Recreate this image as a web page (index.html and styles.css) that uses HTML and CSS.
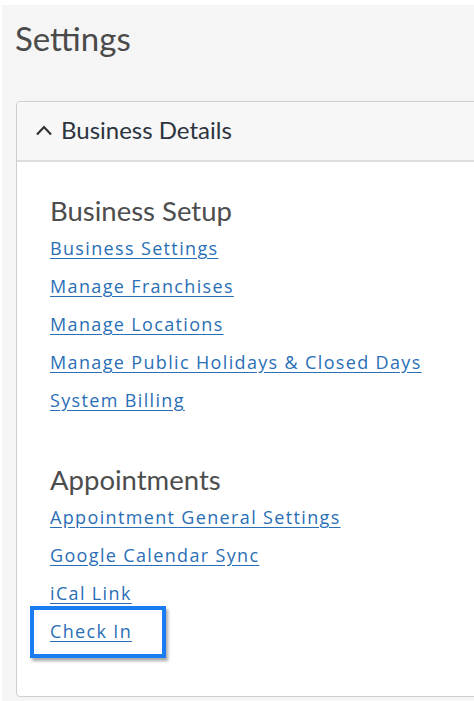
FILE: index.html
```html
<!DOCTYPE html>
<html>
<head>
<meta charset="utf-8">
<link rel="stylesheet" href="styles.css">
</head>
<body>
<div class="page">
  <h1 class="title">Settings</h1>
  <div class="card">
    <div class="card-header">
      <svg class="chevron" width="18" height="12" viewBox="0 0 18 12"><path d="M2 10.5 L9 3 L16 10.5" fill="none" stroke="#333" stroke-width="2.2"/></svg>
      <span>Business Details</span>
    </div>
    <div class="card-body">
      <section class="group">
        <h2>Business Setup</h2>
        <a href="#">Business Settings</a>
        <a href="#">Manage Franchises</a>
        <a href="#">Manage Locations</a>
        <a href="#">Manage Public Holidays &amp; Closed Days</a>
        <a href="#">System Billing</a>
      </section>
      <section class="group">
        <h2>Appointments</h2>
        <a href="#">Appointment General Settings</a>
        <a href="#">Google Calendar Sync</a>
        <a href="#">iCal Link</a>
        <a href="#" class="highlight">Check In</a>
      </section>
    </div>
  </div>
</div>
</body>
</html>
```

FILE: styles.css
```css
html, body {
  margin: 0;
  padding: 0;
  background: #ffffff;
}
body {
  width: 474px;
  height: 701px;
  overflow: hidden;
}
.page {
  margin: 5px 0 0 2px;
  background: #f5f5f5;
  height: 696px;
  padding: 13px 0 0 13px;
  box-sizing: border-box;
  font-family: "Lato", "Open Sans", sans-serif;
}
.title {
  margin: 0;
  font-size: 33px;
  font-weight: 400;
  color: #4a4a4a;
  line-height: 40px;
}
.card {
  margin-top: 43px;
  margin-left: 1px;
  margin-right: -20px;
  background: #ffffff;
  border: 1px solid #cfcfcf;
  border-radius: 4px 0 0 4px;
  height: 596px;
  box-sizing: border-box;
}
.card-header {
  height: 58px;
  background: #f7f7f7;
  border-bottom: 2px solid #dddddd;
  display: flex;
  align-items: center;
  padding-left: 18px;
  gap: 8px;
  font-size: 24px;
  color: #2c3440;
  border-radius: 4px 0 0 0;
}
.card-header span {
  margin-top: -4px;
}
.chevron {
  margin-top: -3px;
}
.card-body {
  padding: 34px 0 0 33px;
}
.group {
  display: flex;
  flex-direction: column;
  align-items: flex-start;
  margin-bottom: 46px;
}
.group h2 {
  margin: 0 0 3px;
  font-size: 27.5px;
  font-weight: 400;
  color: #4d4d4d;
  line-height: 30px;
}
.group a {
  font-family: "Open Sans", sans-serif;
  font-size: 18px;
  letter-spacing: 1.35px;
  color: #2a6fb6;
  text-decoration: underline;
  text-underline-offset: 3px;
  line-height: 38px;
  position: relative;
}
.highlight::after {
  content: "";
  position: absolute;
  left: -20px;
  top: -6px;
  width: 136px;
  height: 52px;
  border: 4px solid #1a7cf2;
  box-sizing: border-box;
  box-shadow: 2px 3px 3px rgba(0,0,0,0.35);
}
```
